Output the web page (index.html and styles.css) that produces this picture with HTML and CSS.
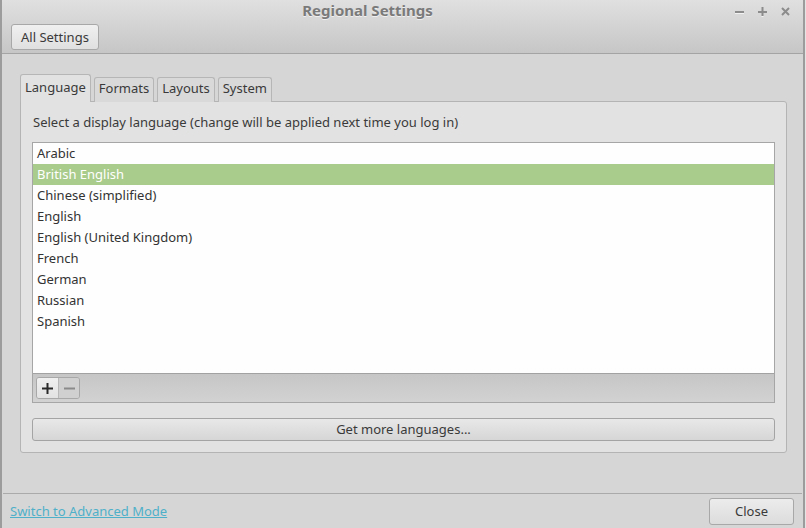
FILE: index.html
```html
<!DOCTYPE html>
<html>
<head>
<meta charset="utf-8">
<link rel="stylesheet" href="styles.css">
</head>
<body>
<div class="window">
  <header class="header">
    <div class="titlebar">
      <span class="title">Regional Settings</span>
      <div class="wm-buttons">
        <svg class="wm" width="10" height="10" viewBox="0 0 10 10"><rect x="0" y="4" width="9" height="2" fill="#8c8c8c"/><rect x="0" y="6" width="9" height="1" fill="#f2f2f2"/></svg>
        <svg class="wm" width="10" height="10" viewBox="0 0 10 10"><rect x="0" y="4" width="9" height="2" fill="#8c8c8c"/><rect x="3.5" y="0" width="2" height="9" fill="#8c8c8c"/><rect x="3.5" y="9" width="2" height="1" fill="#f2f2f2"/></svg>
        <svg class="wm" width="10" height="10" viewBox="0 0 10 10"><path d="M1 1 L8 8 M8 1 L1 8" stroke="#8c8c8c" stroke-width="2"/></svg>
      </div>
    </div>
    <div class="toolbar"><button class="btn">All Settings</button></div>
  </header>
  <main class="content">
    <div class="notebook">
      <div class="tabs">
        <span class="tab active">Language</span>
        <span class="tab">Formats</span>
        <span class="tab">Layouts</span>
        <span class="tab">System</span>
      </div>
      <div class="panel">
        <p class="label">Select a display language (change will be applied next time you log in)</p>
        <div class="list">
          <ul class="rows">
            <li>Arabic</li>
            <li class="selected">British English</li>
            <li>Chinese (simplified)</li>
            <li>English</li>
            <li>English (United Kingdom)</li>
            <li>French</li>
            <li>German</li>
            <li>Russian</li>
            <li>Spanish</li>
          </ul>
          <div class="list-toolbar">
            <div class="seg-group">
              <span class="seg">
                <svg width="11" height="11" viewBox="0 0 11 11"><rect x="0" y="4.5" width="11" height="2" fill="#2a2a2a"/><rect x="4.5" y="0" width="2" height="11" fill="#2a2a2a"/></svg>
              </span>
              <span class="seg dim">
                <svg width="11" height="11" viewBox="0 0 11 11"><rect x="0" y="4.5" width="11" height="2" fill="#8a8a8a"/></svg>
              </span>
            </div>
          </div>
        </div>
        <button class="btn wide">Get more languages...</button>
      </div>
    </div>
  </main>
  <footer class="footer">
    <a class="link" href="#">Switch to Advanced Mode</a>
    <button class="btn close">Close</button>
  </footer>
</div>
</body>
</html>
```
FILE: styles.css
```css
* { box-sizing: border-box; }
html, body { margin: 0; padding: 0; }
body {
  width: 806px;
  height: 528px;
  background: #e4e4e4;
  font-family: "Noto Sans", "DejaVu Sans", sans-serif;
  font-size: 13px;
  color: #3a3a3a;
  overflow: hidden;
}
.window {
  width: 805px;
  height: 528px;
  background: #d6d6d6;
  border-left: 2px solid #9c9c9c;
  border-right: 2px solid #9c9c9c;
  display: flex;
  flex-direction: column;
}
.header {
  height: 54px;
  background: linear-gradient(#e0e0e0, #c6c6c6);
  border-bottom: 1px solid #a4a4a4;
  display: flex;
  flex-direction: column;
}
.titlebar {
  height: 23px;
  display: flex;
  align-items: center;
  justify-content: center;
  position: relative;
  padding-right: 70px;
}
.title {
  font-weight: bold;
  font-size: 15px;
  color: #7a7a7a;
  text-shadow: 0 1px 0 #f0f0f0;
  margin-top: -3px;
}
.wm-buttons {
  position: absolute;
  right: 12px;
  top: 7px;
  display: flex;
  gap: 13px;
}
.wm { display: block; }
.toolbar {
  padding: 1px 0 0 9px;
}
.btn {
  font-family: inherit;
  font-size: 13px;
  color: #3a3a3a;
  background: linear-gradient(#f0f0f0, #e0e0e0);
  border: 1px solid #a8a8a8;
  border-radius: 3px;
  height: 26px;
  padding: 0 9px;
  margin: 0;
}
.content {
  flex: 1;
  padding: 20px 0 0 18px;
}
.notebook {
  width: 767px;
}
.tabs {
  display: flex;
  align-items: flex-end;
  gap: 3px;
  height: 28px;
  position: relative;
  z-index: 1;
}
.tab {
  height: 25px;
  line-height: 21px;
  padding: 0 4px;
  border: 1px solid #b6b6b6;
  border-bottom: none;
  border-radius: 3px 3px 0 0;
  background: #d9d9d9;
}
.tab.active {
  height: 28px;
  line-height: 24px;
  background: #e2e2e2;
  padding: 0 4px 1px 4px;
}
.panel {
  margin-top: -1px;
  height: 352px;
  background: #e2e2e2;
  border: 1px solid #b4b4b4;
  border-radius: 0 3px 3px 3px;
  padding: 11px 11px 12px 11px;
}
.label {
  margin: 0 0 11px 0;
  line-height: 18px;
  padding-left: 1px;
}
.list {
  border: 1px solid #a6a6a6;
  background: #ffffff;
}
.rows {
  list-style: none;
  margin: 0;
  padding: 0;
  height: 230px;
  background: #fefefe;
}
.rows li {
  height: 21px;
  line-height: 21px;
  padding-left: 4px;
  color: #333;
}
.rows li.selected {
  background: #a9cb8b;
  color: #ffffff;
}
.list-toolbar {
  height: 29px;
  border-top: 1px solid #a2a2a2;
  background: linear-gradient(#c6c6c6, #d2d2d2);
  padding: 3px 0 0 3px;
}
.seg-group {
  display: inline-flex;
  border: 1px solid #a8a8a8;
  border-radius: 3px;
  overflow: hidden;
  height: 22px;
}
.seg {
  width: 21px;
  display: flex;
  align-items: center;
  justify-content: center;
  background: linear-gradient(#f0f0f0, #e2e2e2);
}
.seg.dim {
  width: 21px;
  border-left: 1px solid #b8b8b8;
  background: #d0d0d0;
}
.btn.wide {
  display: block;
  width: 100%;
  height: 23px;
  margin-top: 15px;
  line-height: 19px;
  background: linear-gradient(#e8e8e8, #d6d6d6);
  border-color: #a4a4a4;
}
.footer {
  height: 35px;
  margin: 0 1px;
  border-top: 1px solid #aaaaaa;
  display: flex;
  align-items: center;
  justify-content: space-between;
  padding: 0 8px 0 7px;
}
.link {
  color: #4fb0c9;
  text-decoration: underline;
  margin-top: -1px;
}
.btn.close {
  width: 85px;
  height: 27px;
  margin-top: 1px;
  padding-bottom: 2px;
  background: linear-gradient(#ececec, #dcdcdc);
}
```
